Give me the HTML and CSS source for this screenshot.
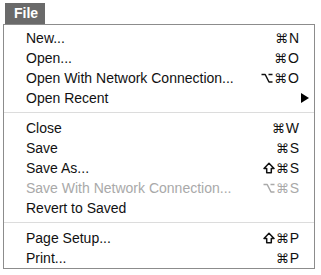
FILE: index.html
```html
<!DOCTYPE html>
<html lang="en">
<head>
  <meta charset="UTF-8"/>
  <title>File menu</title>
  <link rel="stylesheet" href="styles.css">
</head>
<body>
  <div class="menubar">
    <div class="menu-title">File</div>
  </div>
  <div class="menu">
    <div class="item"><span>New...</span><span class="key"><b>⌘</b>N</span></div>
    <div class="item"><span>Open...</span><span class="key"><b>⌘</b>O</span></div>
    <div class="item"><span>Open With Network Connection...</span><span class="key"><svg class="mod" viewBox="0 0 12 12"><path d="M0.5 2.5H4.2L8 10H11.5M7.5 2.5H11.5"/></svg><b>⌘</b>O</span></div>
    <div class="item"><span>Open Recent</span><span class="arrow"></span></div>
    <div class="sep"></div>
    <div class="item"><span>Close</span><span class="key"><b>⌘</b>W</span></div>
    <div class="item"><span>Save</span><span class="key"><b>⌘</b>S</span></div>
    <div class="item"><span>Save As...</span><span class="key"><svg class="mod" viewBox="0 0 12 12"><path d="M6 1.2L11 6.5H8.3V10.8H3.7V6.5H1Z"/></svg><b>⌘</b>S</span></div>
    <div class="item disabled"><span>Save With Network Connection...</span><span class="key"><svg class="mod" viewBox="0 0 12 12"><path d="M0.5 2.5H4.2L8 10H11.5M7.5 2.5H11.5"/></svg><b>⌘</b>S</span></div>
    <div class="item"><span>Revert to Saved</span></div>
    <div class="sep"></div>
    <div class="item"><span>Page Setup...</span><span class="key"><svg class="mod" viewBox="0 0 12 12"><path d="M6 1.2L11 6.5H8.3V10.8H3.7V6.5H1Z"/></svg><b>⌘</b>P</span></div>
    <div class="item"><span>Print...</span><span class="key"><b>⌘</b>P</span></div>
  </div>
</body>
</html>
```

FILE: styles.css
```css
:root {
  --tab-bg:   #6a6a6a;
  --border:   #8c8c8c;
  --sep:      #dcdcdc;
  --fg:       #111111;
  --muted:    #a9a9a9;
}
*,*::before,*::after { box-sizing:border-box; margin:0; padding:0 }
body {
  background:#ffffff;
  color:var(--fg);
  font-family:"Liberation Sans", Arial, sans-serif;
  font-size:14px;
  padding:3px 6px 0 3px;
  width:321px;
}
.menubar {
  display:flex;
  padding-left:2px;
}
.menu-title {
  background:var(--tab-bg);
  color:#fff;
  font-weight:700;
  width:40px; height:21px;
  line-height:21px;
  padding-left:9px;
}
.menu {
  width:312px;
  border:1px solid var(--border);
  padding:3px 0 0;
}
.item {
  display:flex;
  justify-content:space-between;
  align-items:center;
  height:20px;
  padding:0 15px 0 22px;
}
.item.disabled { color:var(--muted) }
.key {
  display:flex;
  align-items:center;
}
/* modifier glyphs */
.key b {
  font-family:"DejaVu Sans", sans-serif;
  font-weight:400;
  font-size:13px;
  margin-right:1px;
}
.mod {
  width:12px; height:12px;
  margin-right:1px;
  fill:none;
  stroke:currentColor;
  stroke-width:1.5;
  stroke-linejoin:round;
}
.arrow {
  width:0; height:0;
  margin-right:-10px;
  border-top:5px solid transparent;
  border-bottom:5px solid transparent;
  border-left:8px solid #000;
}
.sep {
  height:1px;
  background:var(--sep);
  margin:4px 0 5px;
}
```
